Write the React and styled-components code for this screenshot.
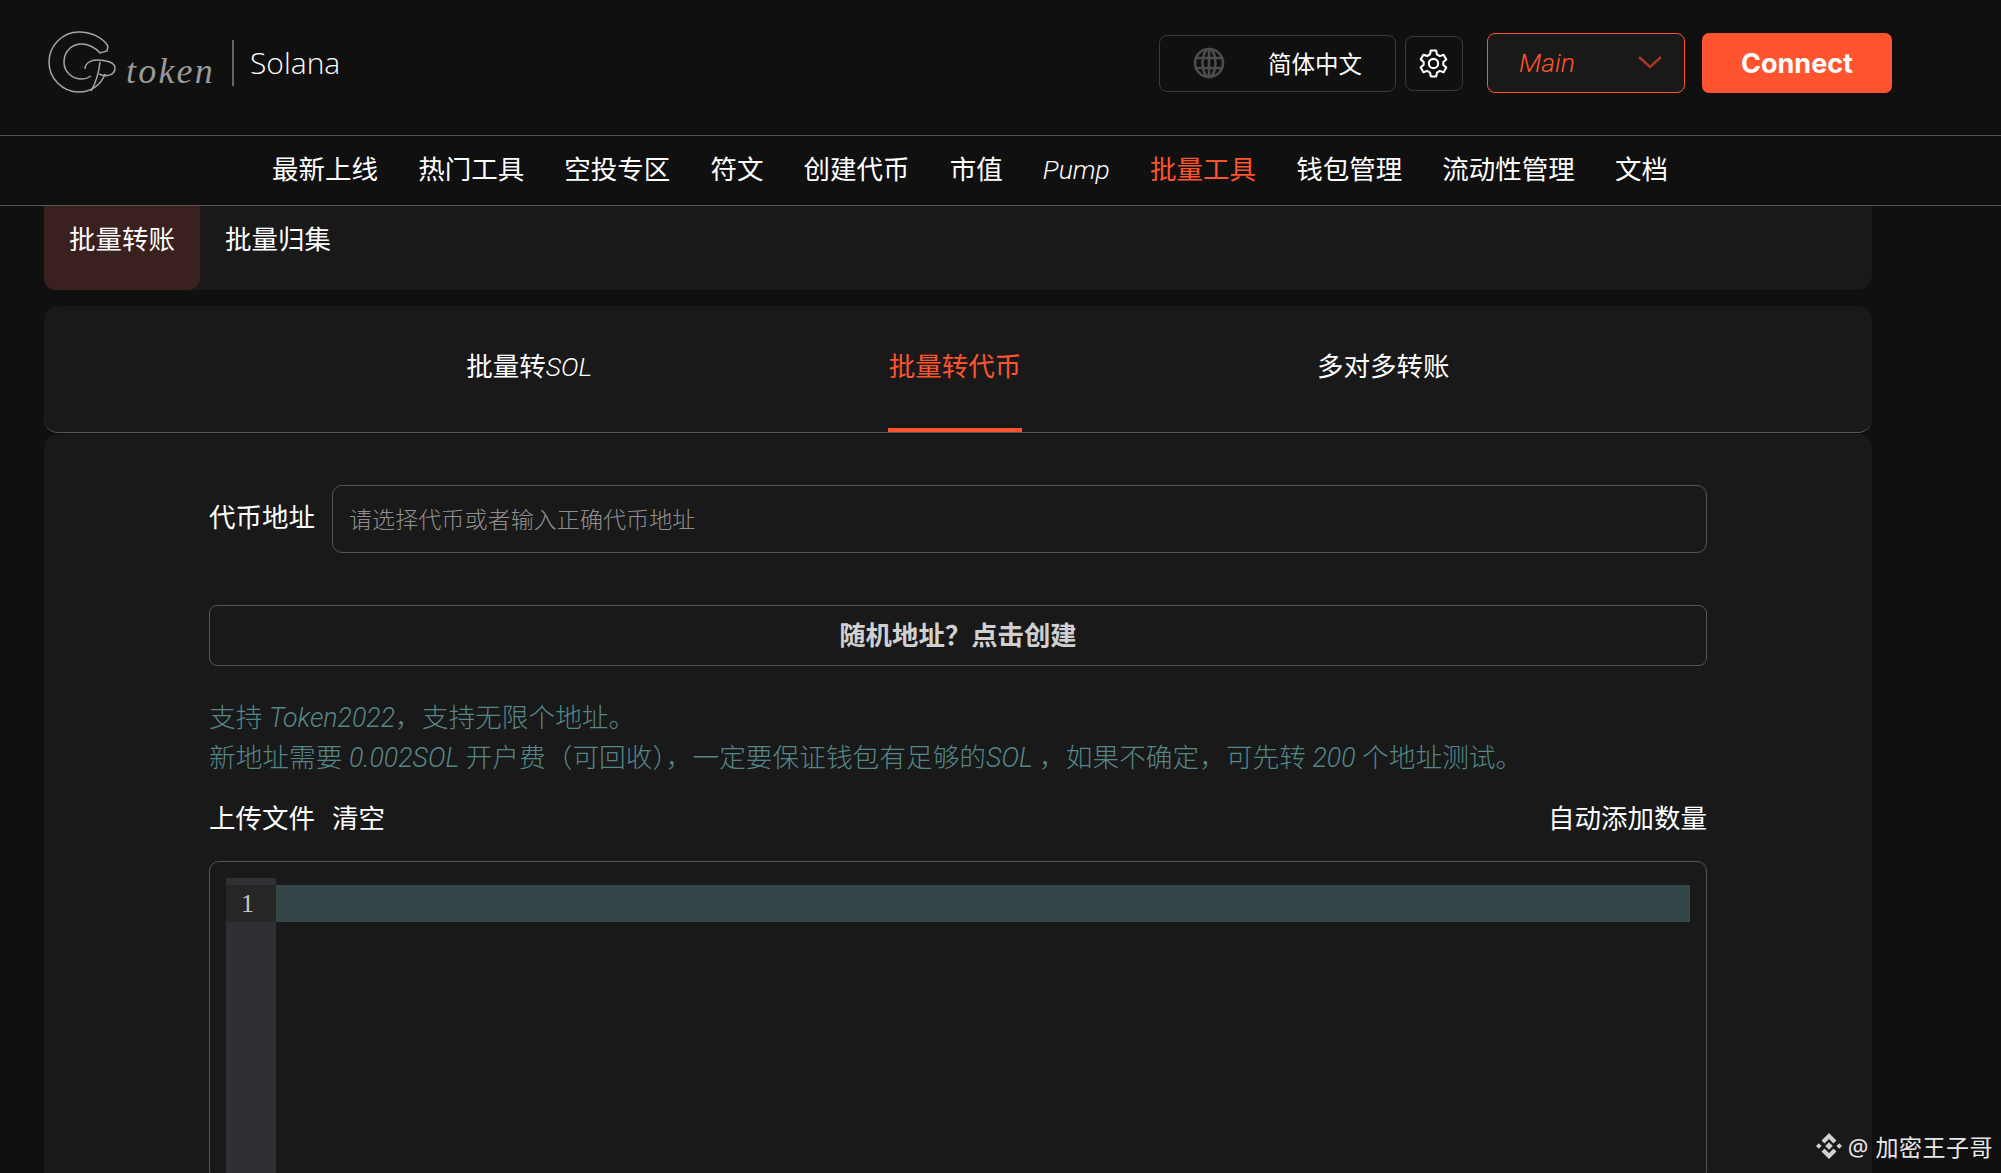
import React from "react";
import styled, { createGlobalStyle } from "styled-components";

const CJK = `Roboto, "Noto Sans CJK SC", sans-serif`;
const ACCENT = "#ff542e";
const LINE = "#555555";

const Global = createGlobalStyle`
  html, body { margin: 0; background: #101010; height: 1173px; overflow: hidden; }
  * { box-sizing: border-box; }
  body { font-family: ${CJK}; color: #fff; }
`;

const Page = styled.div`
  width: 2001px;
  height: 1173px;
  overflow: hidden;
  position: relative;
  background: #101010;
`;

const Header = styled.header`
  height: 136px;
  border-bottom: 1px solid ${LINE};
  display: flex;
  align-items: flex-start;
  padding: 33px 0 0 47px;
`;

const Brand = styled.div`
  display: flex;
  align-items: center;
  height: 60px;
  width: 1112px;
`;
const LogoWord = styled.span`
  font: italic 36px "Liberation Serif", serif;
  letter-spacing: 2.2px;
  color: #9a9a9a;
  margin: 16px 0 0 9px;
  width: 89px;
  white-space: nowrap;
`;
const BrandDivider = styled.span`
  width: 2px;
  height: 46px;
  background: #666;
  margin: 0 16px 0 17px;
`;
const Chain = styled.span`
  font: 300 30px "Open Sans", sans-serif;
  color: #fff;
  margin-top: -2px;
`;

const Actions = styled.div`
  display: flex;
  align-items: center;
  height: 60px;
`;
const LangButton = styled.div`
  width: 237px;
  height: 57px;
  border: 1px solid #3a3a3a;
  border-radius: 8px;
  display: flex;
  align-items: center;
  padding-left: 33px;
  font-size: 23.5px;
  color: #fff;
  gap: 43px;
`;
const SettingsButton = styled.div`
  width: 58px;
  height: 55px;
  margin-left: 9px;
  padding-right: 2px;
  border: 1px solid #3a3a3a;
  border-radius: 8px;
  display: flex;
  align-items: center;
  justify-content: center;
`;
const NetSelect = styled.div`
  width: 198px;
  height: 60px;
  margin-left: 24px;
  border: 1px solid ${ACCENT};
  border-radius: 8px;
  background: #191919;
  display: flex;
  align-items: center;
  justify-content: space-between;
  padding: 0 21px 2px 31px;
  font: italic 300 26.5px Roboto, sans-serif;
  color: ${ACCENT};
`;
const ConnectButton = styled.div`
  width: 190px;
  height: 60px;
  margin-left: 17px;
  background: ${ACCENT};
  border-radius: 7px;
  display: flex;
  align-items: center;
  justify-content: center;
  font: 700 27px Inter, sans-serif;
  color: #fff;
`;

const Nav = styled.nav`
  height: 70px;
  border-bottom: 1px solid ${LINE};
  display: flex;
  align-items: center;
  gap: 40.15px;
  padding: 0 0 0 272px;
`;
const NavItem = styled.span`
  font-size: 26.5px;
  color: ${(p) => (p.$active ? ACCENT : "#fff")};
  font-style: ${(p) => (p.$italic ? "italic" : "normal")};
  font-weight: ${(p) => (p.$italic ? 300 : 400)};
  white-space: nowrap;
  line-height: 1;
`;

const Main = styled.main`
  margin: 0 129px 0 44px;
`;
const SubTabs = styled.div`
  height: 84px;
  background: #191919;
  border-radius: 0 0 14px 14px;
  display: flex;
`;
const SubTab = styled.div`
  width: 156px;
  background: ${(p) => (p.$active ? "#3a201e" : "transparent")};
  border-radius: 0 0 12px 12px;
  text-align: center;
  padding-top: 16px;
  font-size: 26.5px;
  line-height: 36px;
  color: #fff;
`;

const ModeTabs = styled.div`
  height: 127px;
  margin-top: 16px;
  background: #191919;
  border-radius: 14px;
  border-bottom: 1px solid ${LINE};
  display: grid;
  grid-template-columns: 844px 134px 1fr;
`;
const ModeTab = styled.div`
  position: relative;
  height: 126px;
  display: flex;
  align-items: center;
  justify-content: center;
  font-size: 26.5px;
  color: ${(p) => (p.$active ? ACCENT : "#fff")};
  padding-bottom: 10px;
  white-space: nowrap;
`;
const FirstMode = styled(ModeTab)`
  justify-content: flex-end;
  padding-right: 296px;
`;
const LastMode = styled(ModeTab)`
  justify-content: flex-start;
  padding-left: 295px;
`;
const Underline = styled.span`
  position: absolute;
  left: 0;
  right: 0;
  bottom: 0;
  height: 4px;
  background: ${ACCENT};
`;
const Latin = styled.i`
  font-weight: 300;
`;

const Panel = styled.section`
  height: 800px;
  margin-top: 1px;
  background: #191919;
  border-radius: 14px;
  padding: 51px 165px 0;
`;
const FieldRow = styled.div`
  display: flex;
  align-items: center;
  gap: 17px;
`;
const Label = styled.label`
  font-size: 26.5px;
  line-height: 36px;
  white-space: nowrap;
  color: #fff;
  width: 106px;
  margin-top: -3px;
`;
const Input = styled.div`
  flex: 1;
  height: 68px;
  border: 1px solid ${LINE};
  border-radius: 10px;
  display: flex;
  align-items: center;
  padding: 0 0 2px 16px;
  font-size: 23.1px;
  font-weight: 300;
  color: #8f8f8f;
`;
const CreateButton = styled.div`
  height: 61px;
  margin-top: 52px;
  border: 1px solid ${LINE};
  border-radius: 8px;
  display: flex;
  align-items: center;
  justify-content: center;
  font-size: 26.4px;
  font-weight: 700;
  color: #d0d0d0;
  padding: 0 0 4px 0;
`;
const Notes = styled.div`
  margin-top: 32px;
  font-size: 26.7px;
  line-height: 40px;
  font-weight: 300;
  color: #558788;
  white-space: nowrap;
`;
const Toolbar = styled.div`
  display: flex;
  justify-content: space-between;
  margin-top: 23px;
  font-size: 26.5px;
  line-height: 36px;
`;
const ToolGroup = styled.div`
  display: flex;
  gap: 17px;
`;
const Editor = styled.div`
  height: 320px;
  margin-top: 24px;
  border: 1px solid ${LINE};
  border-radius: 10px;
  padding: 16px 16px 0;
  display: flex;
`;
const Gutter = styled.div`
  width: 50px;
  height: 300px;
  background: #2f2f34;
  padding-top: 7px;
`;
const GutterLine = styled.div`
  height: 37px;
  background: #262627;
  color: #c8c8c8;
  text-align: center;
  padding-right: 7px;
  font: 26px/37px "Liberation Serif", serif;
`;
const Code = styled.div`
  flex: 1;
  padding-top: 7px;
`;
const ActiveLine = styled.div`
  height: 37px;
  background: #354648;
`;

const Watermark = styled.div`
  position: absolute;
  right: 8px;
  bottom: 10px;
  display: flex;
  align-items: center;
  gap: 5px;
  font: 23px "Noto Sans", "Noto Sans CJK SC", sans-serif;
  letter-spacing: 0.5px;
  color: #e8e8e8;
`;

const Logo = () => (
  <svg width="70" height="64" viewBox="0 0 70 64" fill="none" stroke="#a5a5a5" strokeWidth="1.5">
    <path d="M61 15C55 6 44 1 32 1 15 1 2 15 2 31s13 30 30 30c12 0 22-7 26-18" />
    <path d="M61 15l-1 5-7 2C48 16 40 13 35 13 24 13 17 21 17 31s8 17 18 17c3 0 6-1 9-3" />
    <path d="M38 38c0-6 6-9 12-9 8 0 18 2 18 8 0 8-10 9-16 6" />
    <path d="M53 31c-1 11-5 23-9 29" />
  </svg>
);

const Globe = () => (
  <svg width="32" height="32" viewBox="0 0 32 32" fill="none" stroke="#4c4c4c" strokeWidth="2.6">
    <circle cx="16" cy="16" r="14" />
    <ellipse cx="16" cy="16" rx="6.5" ry="14" />
    <path d="M16 2v28M3 11h26M3 21h26" />
  </svg>
);

const Gear = () => (
  <svg width="31" height="31" viewBox="0 0 24 24" fill="none" stroke="#fff" strokeWidth="1.6" strokeLinejoin="round">
    <path d="M9.900 2h4.200l.6 3 2.200 1.300 2.900-1 2.100 3.600-2.300 2v2.200l2.300 2-2.100 3.600-2.900-1-2.200 1.300-.6 3H9.900l-.6-3-2.200-1.300-2.900 1L2.100 15l2.300-2v-2.200l-2.300-2 2.100-3.600 2.900 1 2.200-1.300z" />
    <circle cx="12" cy="12" r="3.6" />
  </svg>
);

const Chevron = () => (
  <svg width="26" height="14" viewBox="0 0 26 14" fill="none" stroke="#a93a20" strokeWidth="2.4">
    <path d="M2 2l11 10L24 2" />
  </svg>
);

const BinanceMark = () => (
  <svg width="28" height="28" viewBox="0 0 28 28" fill="#d0d0d0">
    <path d="M14 1l7.500 7.500-3 3L14 7l-4.500 4.500-3-3z" />
    <path d="M14 27l7.500-7.500-3-3L14 21l-4.500-4.500-3 3z" />
    <path d="M14 10.200l3.800 3.800-3.800 3.800-3.800-3.800z" />
    <path d="M3.800 11.200l2.800 2.800-2.800 2.800L1 14z" />
    <path d="M24.200 11.200l2.800 2.800-2.800 2.800-2.800-2.800z" />
  </svg>
);

const navItems = ["最新上线", "热门工具", "空投专区", "符文", "创建代币", "市值", "Pump", "批量工具", "钱包管理", "流动性管理", "文档"];

export default function App() {
  return (
    <Page>
      <Global />
      <Header>
        <Brand>
          <Logo />
          <LogoWord>token</LogoWord>
          <BrandDivider />
          <Chain>Solana</Chain>
        </Brand>
        <Actions>
          <LangButton>
            <Globe />
            <span>简体中文</span>
          </LangButton>
          <SettingsButton>
            <Gear />
          </SettingsButton>
          <NetSelect>
            <span>Main</span>
            <Chevron />
          </NetSelect>
          <ConnectButton>Connect</ConnectButton>
        </Actions>
      </Header>
      <Nav>
        {navItems.map((n) => (
          <NavItem key={n} $active={n === "批量工具"} $italic={n === "Pump"}>
            {n}
          </NavItem>
        ))}
      </Nav>
      <Main>
        <SubTabs>
          <SubTab $active>批量转账</SubTab>
          <SubTab>批量归集</SubTab>
        </SubTabs>
        <ModeTabs>
          <FirstMode>
            <span>
              批量转<Latin>SOL</Latin>
            </span>
          </FirstMode>
          <ModeTab $active>
            批量转代币
            <Underline />
          </ModeTab>
          <LastMode>多对多转账</LastMode>
        </ModeTabs>
        <Panel>
          <FieldRow>
            <Label>代币地址</Label>
            <Input>请选择代币或者输入正确代币地址</Input>
          </FieldRow>
          <CreateButton>随机地址？点击创建</CreateButton>
          <Notes>
            <div>
              支持 <Latin>Token2022</Latin>，支持无限个地址。
            </div>
            <div>
              新地址需要 <Latin>0.002SOL</Latin> 开户费（可回收），一定要保证钱包有足够的<Latin>SOL</Latin> ，如果不确定，可先转 <Latin>200</Latin> 个地址测试。
            </div>
          </Notes>
          <Toolbar>
            <ToolGroup>
              <span>上传文件</span>
              <span>清空</span>
            </ToolGroup>
            <span>自动添加数量</span>
          </Toolbar>
          <Editor>
            <Gutter>
              <GutterLine>1</GutterLine>
            </Gutter>
            <Code>
              <ActiveLine />
            </Code>
          </Editor>
        </Panel>
      </Main>
      <Watermark>
        <BinanceMark />
        <span>@ 加密王子哥</span>
      </Watermark>
    </Page>
  );
}
